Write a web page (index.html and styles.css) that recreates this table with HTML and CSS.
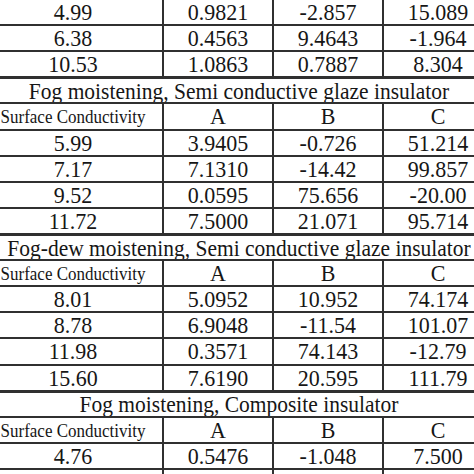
FILE: index.html
```html
<!DOCTYPE html>
<html>
<head>
<meta charset="utf-8">
<link rel="stylesheet" href="styles.css">
</head>
<body>
<table class="grid">
  <colgroup>
    <col class="c1"><col class="c2"><col class="c3"><col class="c4">
  </colgroup>
  <tbody>
    <tr><td><span>4.99</span></td><td><span>0.9821</span></td><td><span>-2.857</span></td><td><span>15.089</span></td></tr>
    <tr><td><span>6.38</span></td><td><span>0.4563</span></td><td><span>9.4643</span></td><td><span>-1.964</span></td></tr>
    <tr><td><span>10.53</span></td><td><span>1.0863</span></td><td><span>0.7887</span></td><td><span>8.304</span></td></tr>
    <tr class="title"><td colspan="4"><span>Fog moistening, Semi conductive glaze insulator</span></td></tr>
    <tr class="head"><td><span class="small">Surface Conductivity</span></td><td><span>A</span></td><td><span>B</span></td><td><span>C</span></td></tr>
    <tr><td><span>5.99</span></td><td><span>3.9405</span></td><td><span>-0.726</span></td><td><span>51.214</span></td></tr>
    <tr><td><span>7.17</span></td><td><span>7.1310</span></td><td><span>-14.42</span></td><td><span>99.857</span></td></tr>
    <tr><td><span>9.52</span></td><td><span>0.0595</span></td><td><span>75.656</span></td><td><span>-20.00</span></td></tr>
    <tr><td><span>11.72</span></td><td><span>7.5000</span></td><td><span>21.071</span></td><td><span>95.714</span></td></tr>
    <tr class="title"><td colspan="4"><span>Fog-dew moistening, Semi conductive glaze insulator</span></td></tr>
    <tr class="head"><td><span class="small">Surface Conductivity</span></td><td><span>A</span></td><td><span>B</span></td><td><span>C</span></td></tr>
    <tr><td><span>8.01</span></td><td><span>5.0952</span></td><td><span>10.952</span></td><td><span>74.174</span></td></tr>
    <tr><td><span>8.78</span></td><td><span>6.9048</span></td><td><span>-11.54</span></td><td><span>101.07</span></td></tr>
    <tr><td><span>11.98</span></td><td><span>0.3571</span></td><td><span>74.143</span></td><td><span>-12.79</span></td></tr>
    <tr><td><span>15.60</span></td><td><span>7.6190</span></td><td><span>20.595</span></td><td><span>111.79</span></td></tr>
    <tr class="title"><td colspan="4"><span>Fog moistening, Composite insulator</span></td></tr>
    <tr class="head"><td><span class="small">Surface Conductivity</span></td><td><span>A</span></td><td><span>B</span></td><td><span>C</span></td></tr>
    <tr><td><span>4.76</span></td><td><span>0.5476</span></td><td><span>-1.048</span></td><td><span>7.500</span></td></tr>
    <tr><td><span>&nbsp;</span></td><td><span>&nbsp;</span></td><td><span>&nbsp;</span></td><td><span>&nbsp;</span></td></tr>
  </tbody>
</table>
</body>
</html>
```
FILE: styles.css
```css
html, body {
  margin: 0;
  padding: 0;
  background: #ffffff;
  overflow: hidden;
  width: 474px;
  height: 474px;
}

.grid {
  margin-left: -16px;
  border-collapse: separate;
  border-spacing: 0;
  table-layout: fixed;
  width: 510px;
  font-family: "Liberation Serif", "Times New Roman", serif;
  font-size: 22px;
  color: #161616;
}

.c1 { width: 180px; }
.c2 { width: 110px; }
.c3 { width: 110px; }
.c4 { width: 110px; }

.grid td {
  box-sizing: border-box;
  height: 26.12px;
  padding: 0;
  text-align: center;
  vertical-align: middle;
  line-height: 22px;
  border-right: 2px solid #303030;
  border-bottom: 2px solid #303030;
  white-space: nowrap;
  overflow: hidden;
}

.grid td span {
  display: inline-block;
  position: relative;
  top: 1px;
  transform: scaleY(1.06);
}

.grid .title td {
  border-right: none;
  border-top: 1px solid #303030;
  font-size: 21.5px;
}

.grid .small {
  font-size: 17px;
}
```
